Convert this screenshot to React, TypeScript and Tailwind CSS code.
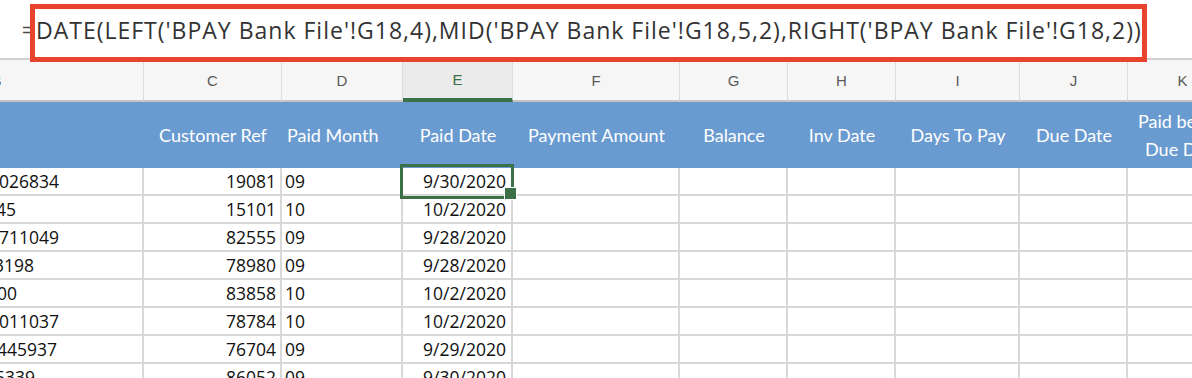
import React from "react";

const COLS =
  "grid grid-cols-[144px_138px_121px_110px_167px_108px_108px_124px_108px_110px]";

const letters = ["B", "C", "D", "E", "F", "G", "H", "I", "J", "K"];

type Row = { b: string; bCls: string; c: string; d: string; e: string };

const rows: Row[] = [
  { b: "026834", bCls: "-ml-[1px]", c: "19081", d: "09", e: "9/30/2020" },
  { b: "45", bCls: "-ml-[4px]", c: "15101", d: "10", e: "10/2/2020" },
  { b: "711049", bCls: "-ml-[1px]", c: "82555", d: "09", e: "9/28/2020" },
  { b: "3198", bCls: "-ml-[6px]", c: "78980", d: "09", e: "9/28/2020" },
  { b: "00", bCls: "-ml-[3px]", c: "83858", d: "10", e: "10/2/2020" },
  { b: "011037", bCls: "-ml-[1px]", c: "78784", d: "10", e: "10/2/2020" },
  { b: "445937", bCls: "-ml-[3px]", c: "76704", d: "09", e: "9/29/2020" },
  { b: "5339", bCls: "-ml-[5px]", c: "86052", d: "09", e: "9/30/2020" },
];

const cell = "border-r-2 border-b-2 border-[#d8d8d8]";

export default function App() {
  return (
    <div className="relative w-[1192px] h-[378px] overflow-hidden bg-white font-[Lato,sans-serif]">
      {/* Formula bar */}
      <div className="h-[60px] flex items-center bg-white border-b-2 border-[#d0d0d0]">
        <div className="w-[30px] h-full flex items-center shrink-0">
          <div className="ml-[6px] w-px h-[38px] bg-[#e4e4e4]" />
          <span className="ml-[16px] text-[20px] text-[#4a4a4a] font-['Liberation_Sans',sans-serif] leading-none pt-[2px]">
            =
          </span>
        </div>
        <div className="pl-[6px] pt-[3px] text-[23px] tracking-[1px] text-[#333333] whitespace-nowrap font-['Open_Sans',sans-serif]">
          DATE(LEFT('BPAY Bank File'!G18,4),MID('BPAY Bank File'!G18,5,2),RIGHT('BPAY Bank File'!G18,2))
        </div>
      </div>

      {/* Column letters */}
      <div className={`${COLS} h-[42px] bg-[#f6f6f6]`}>
        {letters.map((l) => (
          <div
            key={l}
            className={
              l === "E"
                ? "flex items-center justify-center pt-[3px] bg-[#ebebeb] border-r border-[#dcdcdc] border-b-4 border-b-[#3c7148] text-[#3c7148] text-[15px] font-['Liberation_Sans',sans-serif]"
                : "flex items-center justify-center pt-[3px] border-r border-[#dcdcdc] border-b-2 border-b-[#c4c4c4] text-[#5a5a5a] text-[15px] font-['Liberation_Sans',sans-serif]"
            }
          >
            <span className={l === "B" ? "-ml-[150px]" : ""}>{l}</span>
          </div>
        ))}
      </div>

      {/* Blue header */}
      <div className={`${COLS} h-[66px] bg-[#6a9bd0] text-white text-[18px]`}>
        <div />
        <div className="flex items-center justify-center">Customer Ref</div>
        <div className="flex items-center pl-[5px]">Paid Month</div>
        <div className="flex items-center justify-center">Paid Date</div>
        <div className="flex items-center justify-center">Payment Amount</div>
        <div className="flex items-center justify-center">Balance</div>
        <div className="flex items-center justify-center">Inv Date</div>
        <div className="flex items-center justify-center">Days To Pay</div>
        <div className="flex items-center justify-center">Due Date</div>
        <div className="flex items-center justify-center text-center leading-[28px] whitespace-nowrap">
          Paid before
          <br />
          Due Date
        </div>
      </div>

      {/* Data rows */}
      {rows.map((r, i) => (
        <div
          key={i}
          className={`${COLS} h-[28px] text-[17.5px] text-[#111111] leading-[26px] font-['Open_Sans',sans-serif]`}
        >
          <div className={`overflow-hidden whitespace-nowrap ${cell}`}>
            <span className={`inline-block ${r.bCls}`}>{r.b}</span>
          </div>
          <div className={`text-right pr-[4px] ${cell}`}>{r.c}</div>
          <div className={`pl-[3px] ${cell}`}>{r.d}</div>
          <div className={`text-right pr-[5px] ${cell}`}>{r.e}</div>
          <div className={cell} />
          <div className={cell} />
          <div className={cell} />
          <div className={cell} />
          <div className={cell} />
          <div className={cell} />
        </div>
      ))}

      {/* Selected cell */}
      <div className="absolute left-[400px] top-[164px] w-[114px] h-[35px] border-[3px] border-[#3c7148]" />
      <div className="absolute left-[504px] top-[187px] w-[13px] h-[13px] bg-[#3c7148] border-[1.5px] border-white" />

      {/* Red annotation box */}
      <div className="absolute left-[30px] top-[4px] w-[1117px] h-[58px] border-[5px] border-[#e8432c]" />
    </div>
  );
}
